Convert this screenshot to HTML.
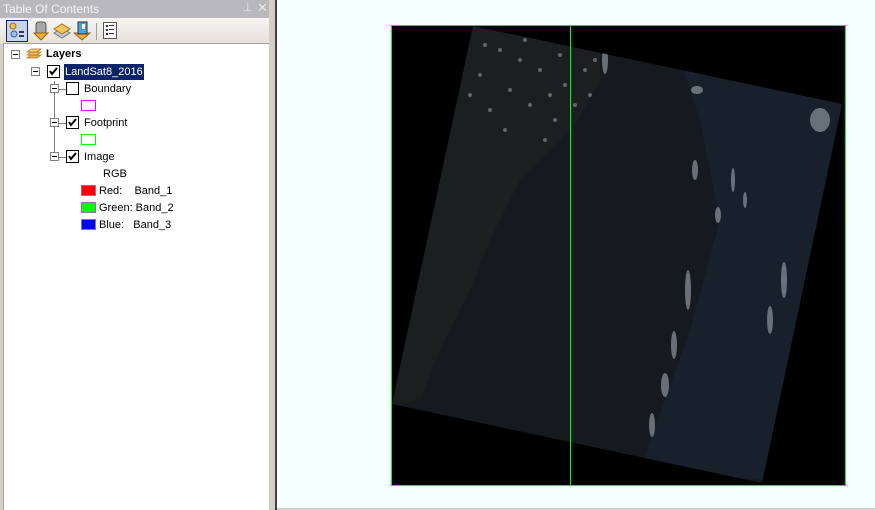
<!DOCTYPE html>
<html><head><style>
*{margin:0;padding:0;box-sizing:border-box}
body{width:875px;height:510px;overflow:hidden;background:#d4d0c8;position:relative;font-family:"Liberation Sans",sans-serif;font-size:11px;color:#000}
.a{position:absolute}
.t{position:absolute;white-space:nowrap;line-height:13px}
.exp{position:absolute;width:9px;height:9px;border:1px solid #808080;background:#fff}
.exp:after{content:"";position:absolute;left:1px;top:3px;width:5px;height:1px;background:#000}
.cb{position:absolute;width:13px;height:13px;border:1px solid #000;background:#fff}
.cb svg{position:absolute;left:0px;top:0px}
.vl{position:absolute;width:1px;background:#808080}
.hl{position:absolute;height:1px;background:#808080}
</style></head><body>
<div class="a" style="left:0;top:0;width:269px;height:18px;background:#b8b8bd"></div>
<div class="t" style="left:3px;top:3px;font-size:12px;color:#f4f4f4">Table Of Contents</div>
<div class="t" style="left:243px;top:2px;color:#e8e8e8;font-size:11px">⊥</div>
<div class="t" style="left:257px;top:1px;color:#e8e8e8;font-size:13px">✕</div>
<div class="a" style="left:0;top:18px;width:269px;height:26px;background:linear-gradient(#f7f6f4,#e4e0da)"></div>
<div class="a" style="left:6px;top:20px;width:22px;height:22px;border:1px solid #0a246a;background:#c8d4e8"></div>
<svg class="a" style="left:9px;top:22px" width="17" height="18"><circle cx="4" cy="4" r="3" fill="#f0c050" stroke="#a07020"/><circle cx="5" cy="12" r="3" fill="#9cc0e8" stroke="#406090"/><rect x="10" y="9" width="5" height="2" fill="#335"/><rect x="10" y="13" width="5" height="2" fill="#335"/></svg>
<svg class="a" style="left:33px;top:21px" width="16" height="20"><rect x="3" y="1" width="10" height="12" rx="3" fill="#a8a8a8" stroke="#555"/><path d="M1 12h14l-7 7z" fill="#f0b030" stroke="#a06010"/></svg>
<svg class="a" style="left:53px;top:22px" width="18" height="18"><path d="M1 11l8-5 8 5-8 5z" fill="#c8c8c8" stroke="#777"/><path d="M1 7l8-5 8 5-8 5z" fill="#f4c860" stroke="#a07020"/></svg>
<svg class="a" style="left:73px;top:21px" width="18" height="20"><path d="M1 12h16l-8 7z" fill="#f0b030" stroke="#a06010"/><rect x="5" y="1" width="9" height="12" fill="#4aa0d8" stroke="#333"/><rect x="9" y="3" width="3" height="5" fill="#fff"/></svg>
<div class="a" style="left:96px;top:23px;width:1px;height:17px;background:#a0a0a0"></div>
<svg class="a" style="left:103px;top:22px" width="14" height="17"><rect x="0.5" y="0.5" width="13" height="16" fill="#fff" stroke="#555"/><rect x="3" y="3" width="2" height="2" fill="#333"/><rect x="6" y="3" width="5" height="1" fill="#333"/><rect x="3" y="7" width="2" height="2" fill="#333"/><rect x="6" y="7" width="5" height="1" fill="#333"/><rect x="3" y="11" width="2" height="2" fill="#333"/><rect x="6" y="11" width="5" height="1" fill="#333"/></svg>
<div class="a" style="left:3px;top:43px;width:266px;height:467px;background:#fff;border-left:1px solid #a0a0a0;border-top:1px solid #a0a0a0"></div>
<div class="vl" style="left:54px;top:81px;height:76px"></div>
<div class="hl" style="left:58px;top:89px;width:8px"></div>
<div class="hl" style="left:58px;top:123px;width:8px"></div>
<div class="hl" style="left:58px;top:157px;width:8px"></div>
<div class="exp" style="left:11px;top:50px"></div>
<svg class="a" style="left:26px;top:46px" width="16" height="16"><path d="M1 12l4-3h10l-4 3z" fill="#e8b040" stroke="#a07020" stroke-width=".7"/><path d="M1 9l4-3h10l-4 3z" fill="#f0c060" stroke="#a07020" stroke-width=".7"/><path d="M1 6l4-3h10l-4 3z" fill="#f8d070" stroke="#a07020" stroke-width=".7"/></svg>
<div class="t" style="left:46px;top:48px;font-weight:bold;font-size:11px">Layers</div>
<div class="exp" style="left:31px;top:67px"></div>
<div class="cb" style="left:47px;top:65px"><svg width="11" height="11"><path d="M2 5l2 3 5-6" stroke="#000" stroke-width="2" fill="none"/></svg></div>
<div class="a" style="left:64px;top:64px;width:80px;height:16px;background:#0a246a"></div>
<div class="t" style="left:65px;top:66px;color:#fff">LandSat8_2016</div>
<div class="exp" style="left:50px;top:84px"></div>
<div class="cb" style="left:66px;top:82px"></div>
<div class="t" style="left:84px;top:83px">Boundary</div>
<div class="a" style="left:81px;top:100px;width:15px;height:11px;border:1px solid #ff00ff"></div>
<div class="exp" style="left:50px;top:118px"></div>
<div class="cb" style="left:66px;top:116px"><svg width="11" height="11"><path d="M2 5l2 3 5-6" stroke="#000" stroke-width="2" fill="none"/></svg></div>
<div class="t" style="left:84px;top:117px">Footprint</div>
<div class="a" style="left:81px;top:134px;width:15px;height:11px;border:1px solid #00ff00"></div>
<div class="exp" style="left:50px;top:152px"></div>
<div class="cb" style="left:66px;top:150px"><svg width="11" height="11"><path d="M2 5l2 3 5-6" stroke="#000" stroke-width="2" fill="none"/></svg></div>
<div class="t" style="left:84px;top:151px">Image</div>
<div class="t" style="left:103px;top:168px">RGB</div>
<div class="a" style="left:81px;top:185px;width:15px;height:11px;background:#f00;border:1px solid #808080"></div>
<div class="t" style="left:99px;top:185px">Red:&nbsp;&nbsp;&nbsp; Band_1</div>
<div class="a" style="left:81px;top:202px;width:15px;height:11px;background:#0f0;border:1px solid #808080"></div>
<div class="t" style="left:99px;top:202px">Green: Band_2</div>
<div class="a" style="left:81px;top:219px;width:15px;height:11px;background:#00f;border:1px solid #808080"></div>
<div class="t" style="left:99px;top:219px">Blue:&nbsp;&nbsp; Band_3</div>
<div class="a" style="left:269px;top:0;width:6px;height:510px;background:#d4d0c8"></div>
<div class="a" style="left:275px;top:0;width:2px;height:510px;background:#404048"></div>
<div class="a" style="left:277px;top:0;width:598px;height:508px;background:#f5fffe"></div>
<div class="a" style="left:277px;top:508px;width:598px;height:2px;background:#d4d0c8"></div>
<svg class="a" style="left:0;top:0" width="875" height="510">
<rect x="391.5" y="25.5" width="454" height="460" fill="#000" stroke="#00ff00"/>
<defs><clipPath id="c"><polygon points="473,26 842,104 762,483 392,404"/></clipPath></defs>
<polygon points="473,26 842,104 762,483 392,404" fill="#151a21"/>
<g clip-path="url(#c)">
<polygon points="473,26 600,50 600,80 578,120 560,140 520,180 490,240 470,290 440,350 420,400 392,404" fill="#1b1f1f"/>
<polygon points="680,60 842,104 800,483 640,470 690,330 720,220 700,120" fill="#17202b"/>
<g fill="#7c848c" opacity=".7">
<circle cx="500" cy="50" r="2"/><circle cx="520" cy="60" r="2"/><circle cx="540" cy="70" r="2"/><circle cx="560" cy="55" r="2"/><circle cx="585" cy="70" r="2"/><circle cx="590" cy="95" r="2"/><circle cx="510" cy="90" r="2"/><circle cx="530" cy="105" r="2"/><circle cx="555" cy="120" r="2"/><circle cx="480" cy="75" r="2"/><circle cx="575" cy="105" r="2"/><circle cx="545" cy="140" r="2"/><circle cx="490" cy="110" r="2"/><circle cx="505" cy="130" r="2"/><circle cx="565" cy="85" r="2"/><circle cx="595" cy="60" r="2"/><circle cx="485" cy="45" r="2"/><circle cx="525" cy="40" r="2"/><circle cx="550" cy="95" r="2"/><circle cx="470" cy="95" r="2"/>
</g>
<g fill="#a0a8b0" opacity=".6">
<ellipse cx="605" cy="60" rx="3" ry="14"/><ellipse cx="697" cy="90" rx="6" ry="4"/><ellipse cx="820" cy="120" rx="10" ry="12"/><ellipse cx="695" cy="170" rx="3" ry="10"/><ellipse cx="718" cy="215" rx="3" ry="8"/><ellipse cx="688" cy="290" rx="3" ry="20"/><ellipse cx="674" cy="345" rx="3" ry="14"/><ellipse cx="665" cy="385" rx="4" ry="12"/><ellipse cx="652" cy="425" rx="3" ry="12"/><ellipse cx="784" cy="280" rx="3" ry="18"/><ellipse cx="770" cy="320" rx="3" ry="14"/><ellipse cx="733" cy="180" rx="2" ry="12"/><ellipse cx="745" cy="200" rx="2" ry="8"/>
</g>
</g>
<line x1="570.5" y1="25" x2="570.5" y2="486" stroke="#00ff00"/>
</svg>
</body></html>
